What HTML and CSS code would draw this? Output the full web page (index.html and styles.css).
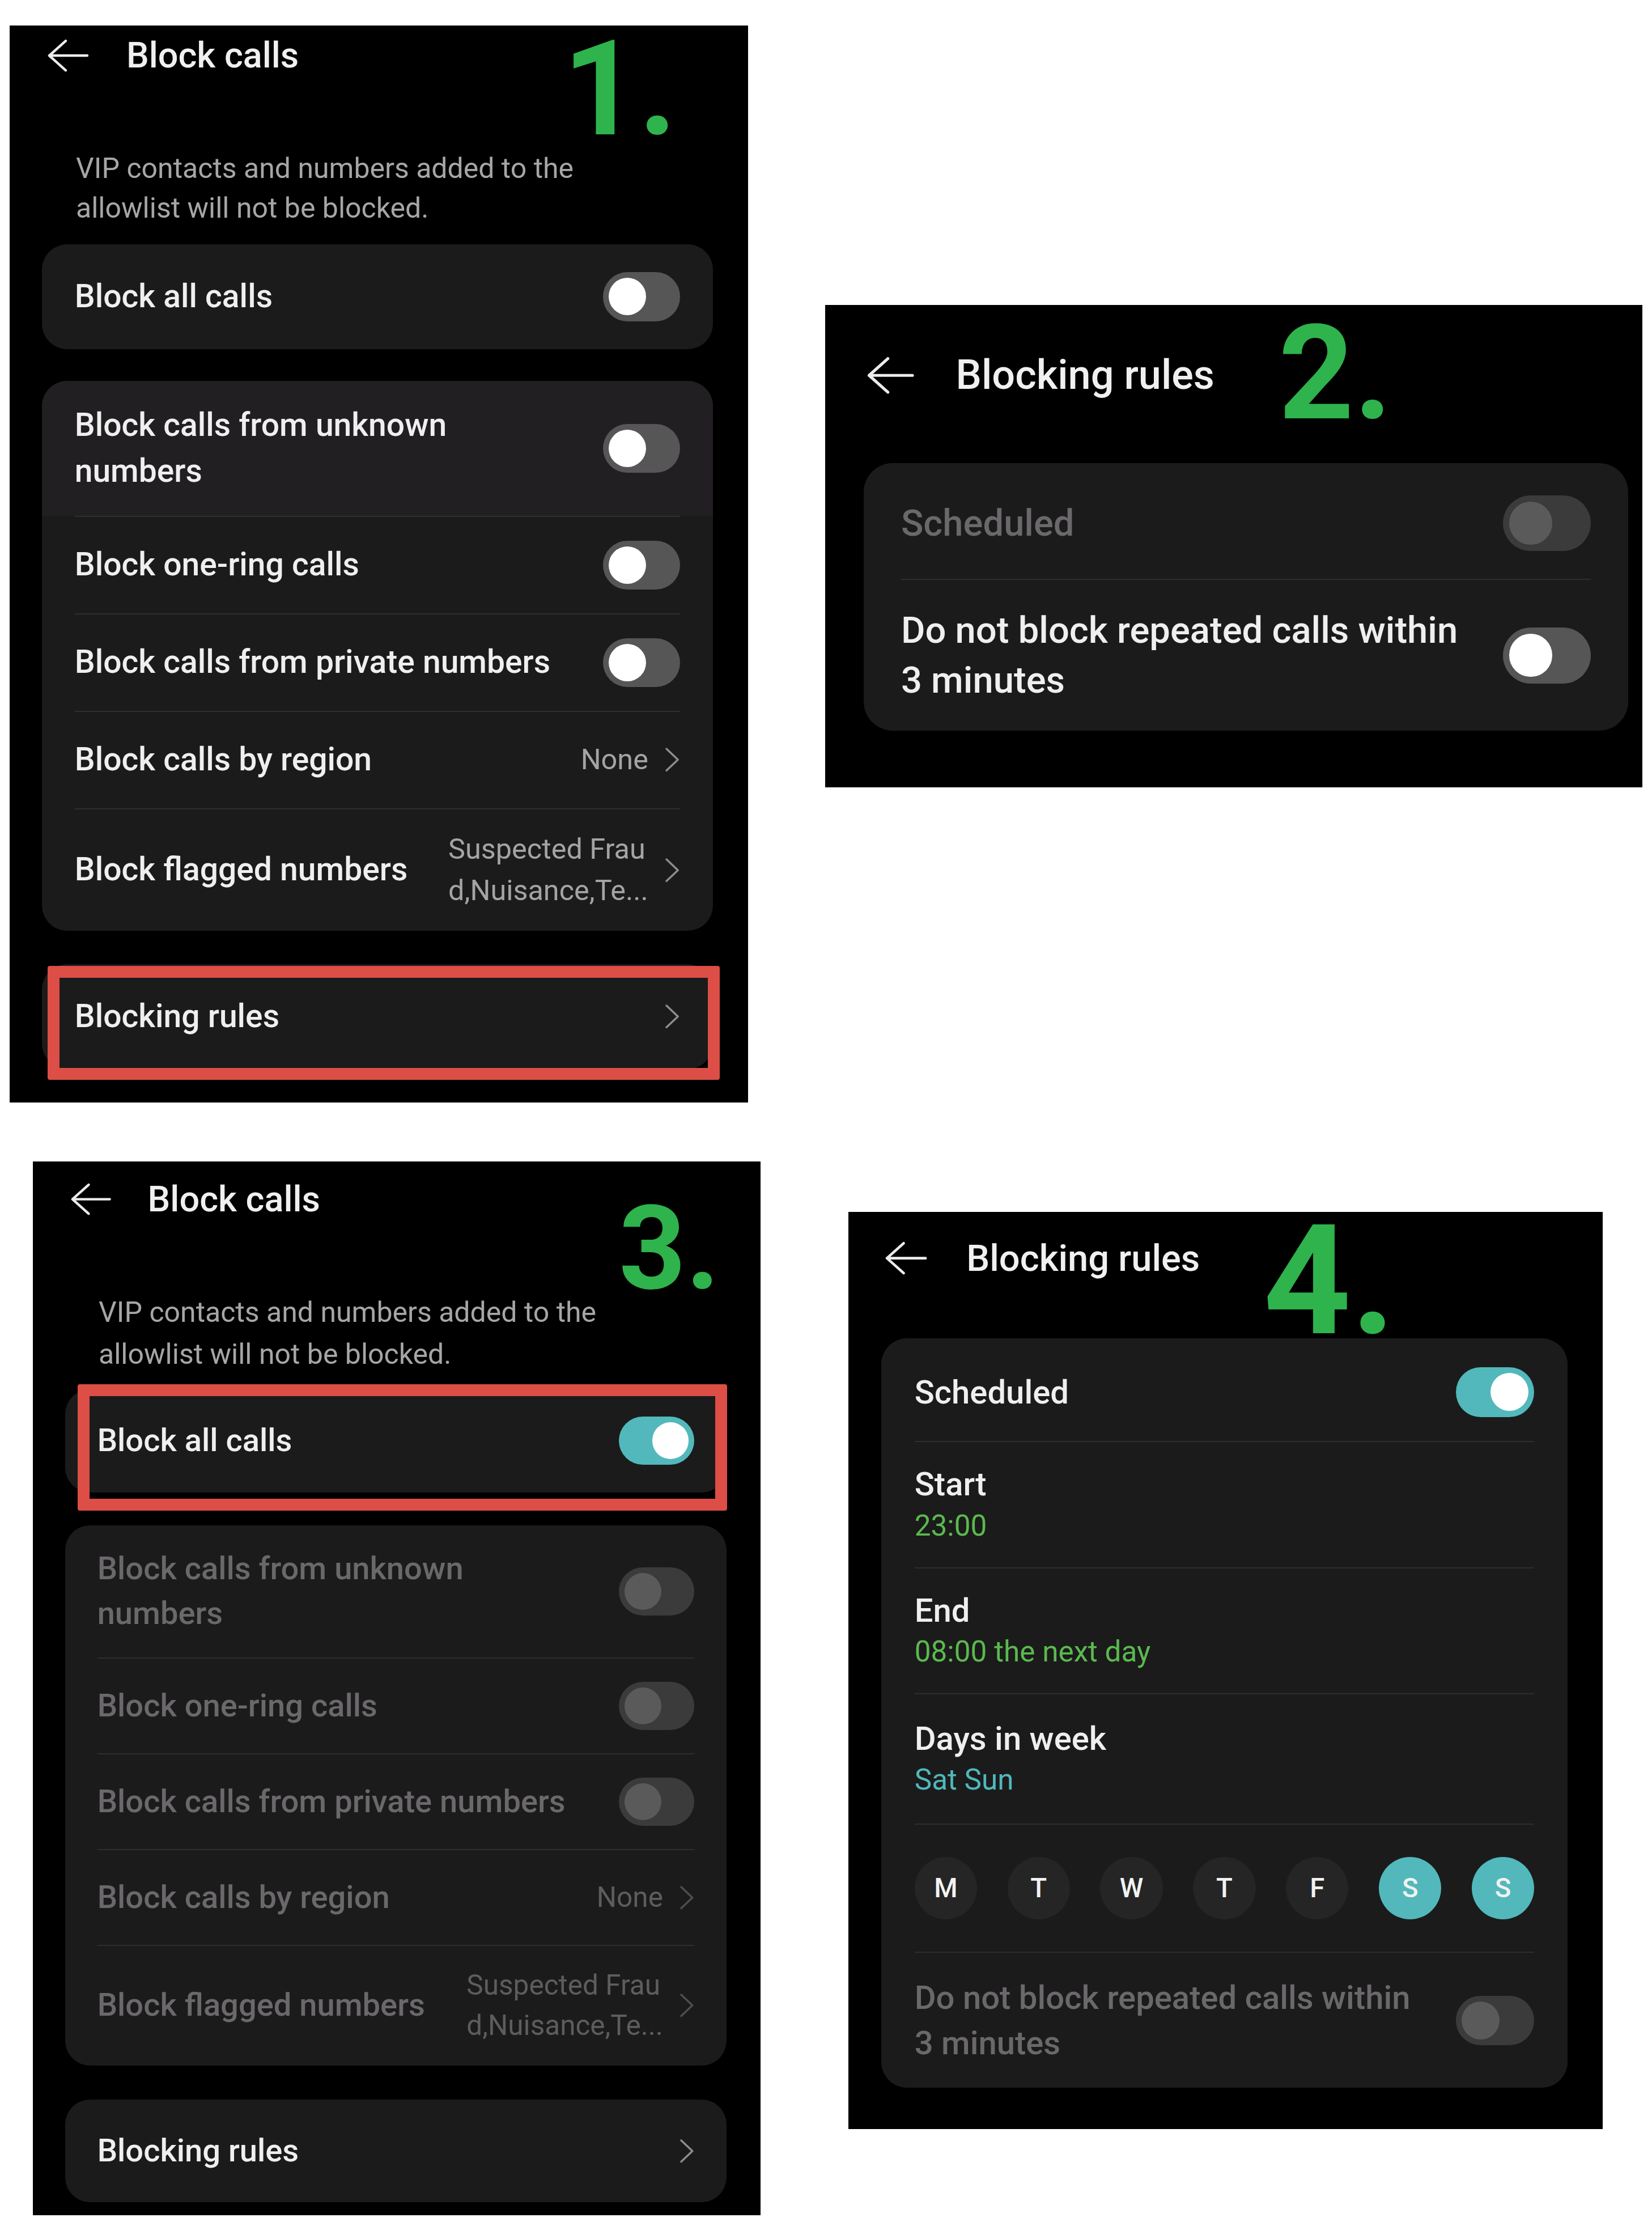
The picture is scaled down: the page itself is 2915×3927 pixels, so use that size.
FILE: index.html
```html
<!DOCTYPE html>
<html lang="en">
<head>
<meta charset="utf-8">
<title>Block calls – steps</title>
<link rel="stylesheet" href="styles.css">
</head>
<body>

<section class="phone p1">
  <header class="bar">
    <svg class="back" viewBox="0 0 74 58"><path d="M71 29H4M33 3L4 29L33 55"/></svg>
    <h1 class="title">Block calls</h1>
  </header>
  <span class="step">1.</span>
  <p class="note">VIP contacts and numbers added to the allowlist will not be blocked.</p>
  <div class="card c1">
    <div class="item"><div class="in h33"><span class="lbl">Block all calls</span><span class="tg"><i class="knob"></i></span></div></div>
  </div>
  <div class="card c2">
    <div class="item pressed"><div class="in h425"><span class="lbl">Block calls from unknown<br>numbers</span><span class="tg"><i class="knob"></i></span></div></div>
    <div class="item"><div class="in h307"><span class="lbl">Block one-ring calls</span><span class="tg"><i class="knob"></i></span></div></div>
    <div class="item"><div class="in h307"><span class="lbl">Block calls from private numbers</span><span class="tg"><i class="knob"></i></span></div></div>
    <div class="item"><div class="in h307"><span class="lbl">Block calls by region</span><span class="val"><span class="vt">None</span><svg class="chev" viewBox="0 0 28 46"><path d="M4 4L24 23L4 42"/></svg></span></div></div>
    <div class="item"><div class="in h387"><span class="lbl">Block flagged numbers</span><span class="val"><span class="vt"><span>Suspected Frau</span><span>d,Nuisance,Te...</span></span><svg class="chev" viewBox="0 0 28 46"><path d="M4 4L24 23L4 42"/></svg></span></div></div>
  </div>
  <div class="card c3">
    <div class="item"><div class="in h33"><span class="lbl">Blocking rules</span><span class="val"><svg class="chev" viewBox="0 0 28 46"><path d="M4 4L24 23L4 42"/></svg></span></div></div>
  </div>
  <div class="red"></div>
</section>

<section class="phone p2">
  <header class="bar">
    <svg class="back" viewBox="0 0 74 58"><path d="M71 29H4M33 3L4 29L33 55"/></svg>
    <h1 class="title">Blocking rules</h1>
  </header>
  <span class="step">2.</span>
  <div class="card">
    <div class="item"><div class="in h319 low"><span class="lbl dim">Scheduled</span><span class="tg dis"><i class="knob"></i></span></div></div>
    <div class="item"><div class="in h419"><span class="lbl">Do not block repeated calls within<br>3 minutes</span><span class="tg"><i class="knob"></i></span></div></div>
  </div>
</section>

<section class="phone p3">
  <header class="bar">
    <svg class="back" viewBox="0 0 74 58"><path d="M71 29H4M33 3L4 29L33 55"/></svg>
    <h1 class="title">Block calls</h1>
  </header>
  <span class="step">3.</span>
  <p class="note">VIP contacts and numbers added to the allowlist will not be blocked.</p>
  <div class="card c1">
    <div class="item"><div class="in h33"><span class="lbl">Block all calls</span><span class="tg on"><i class="knob"></i></span></div></div>
  </div>
  <div class="card c2">
    <div class="item"><div class="in h425"><span class="lbl dim">Block calls from unknown<br>numbers</span><span class="tg dis"><i class="knob"></i></span></div></div>
    <div class="item"><div class="in h307"><span class="lbl dim">Block one-ring calls</span><span class="tg dis"><i class="knob"></i></span></div></div>
    <div class="item"><div class="in h307"><span class="lbl dim">Block calls from private numbers</span><span class="tg dis"><i class="knob"></i></span></div></div>
    <div class="item"><div class="in h307"><span class="lbl dim">Block calls by region</span><span class="val dim"><span class="vt">None</span><svg class="chev" viewBox="0 0 28 46"><path d="M4 4L24 23L4 42"/></svg></span></div></div>
    <div class="item"><div class="in h387"><span class="lbl dim">Block flagged numbers</span><span class="val dim"><span class="vt"><span>Suspected Frau</span><span>d,Nuisance,Te...</span></span><svg class="chev" viewBox="0 0 28 46"><path d="M4 4L24 23L4 42"/></svg></span></div></div>
  </div>
  <div class="card c3">
    <div class="item"><div class="in h33"><span class="lbl">Blocking rules</span><span class="val"><svg class="chev" viewBox="0 0 28 46"><path d="M4 4L24 23L4 42"/></svg></span></div></div>
  </div>
  <div class="red"></div>
</section>

<section class="phone p4">
  <header class="bar">
    <svg class="back" viewBox="0 0 74 58"><path d="M71 29H4M33 3L4 29L33 55"/></svg>
    <h1 class="title">Blocking rules</h1>
  </header>
  <span class="step">4.</span>
  <div class="card">
    <div class="item"><div class="in h318 low"><span class="lbl">Scheduled</span><span class="tg on"><i class="knob"></i></span></div></div>
    <div class="item"><div class="in h39"><div class="stack"><span class="lbl">Start</span><span class="sub green">23:00</span></div></div></div>
    <div class="item"><div class="in h39"><div class="stack"><span class="lbl">End</span><span class="sub green">08:00 the next day</span></div></div></div>
    <div class="item"><div class="in h403"><div class="stack"><span class="lbl">Days in week</span><span class="sub teal">Sat Sun</span></div></div></div>
    <div class="item"><div class="in h398">
      <div class="days">
        <span class="day">M</span><span class="day">T</span><span class="day">W</span><span class="day">T</span><span class="day">F</span><span class="day sel">S</span><span class="day sel">S</span>
      </div>
    </div></div>
    <div class="item"><div class="in h421"><span class="lbl dim">Do not block repeated calls within<br>3 minutes</span><span class="tg dis"><i class="knob"></i></span></div></div>
  </div>
</section>

</body>
</html>
```

FILE: styles.css
```css
* { box-sizing: border-box; }
html, body { margin: 0; padding: 0; }
body {
  width: 2915px;
  height: 3927px;
  background: #ffffff;
  position: relative;
  overflow: hidden;
  font-family: Roboto, "Noto Sans", "Liberation Sans", sans-serif;
}

/* ---------- phone panel ---------- */
.phone {
  position: absolute;
  background: #000;
  color: #efefef;
  display: flex;
  flex-direction: column;
}
.bar { display: flex; align-items: center; flex: none; }
.back {
  width: 1.32em; height: 1.04em; flex: none;
  fill: none; stroke: #ececec; stroke-width: 4.5;
  stroke-linecap: round; stroke-linejoin: round;
}
.title {
  margin: 0; font-weight: 500; line-height: 1.2;
  color: #f0f0f0; white-space: nowrap;
}
.step {
  position: absolute; color: #2fb34c;
  font-weight: 700; line-height: 1; white-space: nowrap;
}
.note {
  margin: 0; font-size: 50px; color: #a6a6a6;
  max-width: 990px; flex: none;
}

/* ---------- cards & rows ---------- */
.card {
  background: #1b1b1b; border-radius: 0.8em;
  overflow: hidden; flex: none;
}
.item { padding: 0 1.03em; }
.item.pressed { background: #221f23; }
.in {
  display: flex; align-items: center;
  justify-content: space-between; gap: 0.5em;
}
.in.low { padding-top: 8px; }
.item + .item .in { border-top: 2px solid #2e2e2e; }
.h33 { min-height: 3.3em; }
.h307 { min-height: 3.07em; }
.h425 { min-height: 4.25em; }
.h387 { min-height: 3.87em; }
.h319 { min-height: 3.19em; }
.h419 { min-height: 4.19em; }
.h318 { min-height: 3.18em; }
.h39 { min-height: 3.9em; }
.h403 { min-height: 4.03em; }
.h398 { min-height: 3.98em; }
.h421 { min-height: 4.21em; }

.lbl { font-size: 1.018em; font-weight: 500; line-height: 1.42; white-space: nowrap; }
.lbl.dim { color: #6b686b; }

.val {
  display: flex; align-items: center; gap: 0.56em;
  font-size: 0.9em; color: #a4a4a4; line-height: 1.44;
  white-space: nowrap;
}
.vt span { display: block; }
.val.dim { color: #5e5c5e; }
.chev {
  width: 0.56em; height: 0.92em; flex: none;
  fill: none; stroke: #8d8d8d; stroke-width: 3.5;
  stroke-linecap: round; stroke-linejoin: round;
}
.val.dim .chev { stroke: #4e4e4e; }

/* ---------- toggle ---------- */
.tg {
  width: 2.43em; height: 1.54em; border-radius: 0.77em;
  background: #555655; display: flex; align-items: center;
  padding: 0 0.18em; flex: none;
}
.knob {
  display: block; width: 1.18em; height: 1.18em;
  border-radius: 50%; background: #ffffff;
}
.tg.on { background: #52b8bb; justify-content: flex-end; }
.tg.dis { background: #3a3b3a; }
.tg.dis .knob { background: #5a5a5a; }

/* ---------- highlight box ---------- */
.red {
  position: absolute;
  border: 21px solid #dc4e46;
  border-radius: 4px;
}

/* ---------- schedule screen ---------- */
.stack { display: flex; flex-direction: column; }
.stack .lbl { line-height: 1.28; }
.sub { font-size: 0.9em; line-height: 1.4; }
.green { color: #5bb94f; }
.teal { color: #4fb8bb; }
.days { display: flex; justify-content: space-between; width: 100%; }
.day {
  font-size: 0.83em; font-weight: 500;
  width: 2.33em; height: 2.33em; border-radius: 50%;
  background: #242524; color: #f2f2f2;
  display: flex; align-items: center; justify-content: center;
}
.day.sel { background: #52b8bb; }

/* ---------- panel 1 ---------- */
.p1 { left: 17px; top: 45px; width: 1303px; height: 1900px; font-size: 56px; padding: 0 62px 0 57px; }
.p1 .bar { height: 106px; padding-left: 9px; }
.p1 .title { font-size: 63px; margin-left: 66px; }
.p1 .step { font-size: 233px; left: 976px; top: -4px; }
.p1 .note { margin-top: 111px; margin-left: 60px; line-height: 70px; }
.p1 .c1 { margin-top: 29px; }
.p1 .c2 { margin-top: 56px; }
.p1 .c3 { margin-top: 59px; }
.p1 .red { left: 67px; top: 1659px; width: 1186px; height: 201px; }

/* ---------- panel 2 ---------- */
.p2 { left: 1456px; top: 538px; width: 1442px; height: 851px; font-size: 64px; padding: 0 25px 0 68px; }
.p2 .bar { height: 248px; padding-left: 5px; }
.p2 .title { font-size: 72px; margin-left: 73px; }
.p2 .step { font-size: 232px; left: 800px; top: 5px; }
.p2 .card { margin-top: 31px; }
.p2 .lbl { line-height: 1.36; }

/* ---------- panel 3 ---------- */
.p3 { left: 58px; top: 2049px; width: 1284px; height: 1859px; font-size: 55px; padding: 0 60px 0 57px; }
.p3 .bar { height: 134px; padding-left: 9px; }
.p3 .title { font-size: 63px; margin-left: 64px; }
.p3 .step { font-size: 206px; left: 1034px; top: 51px; }
.p3 .note { margin-top: 95px; margin-left: 59px; line-height: 74px; }
.p3 .c1 { margin-top: 25px; }
.p3 .c2 { margin-top: 58px; }
.p3 .c3 { margin-top: 60px; }
.p3 .lbl { font-size: 1.02em; }
.p3 .red { left: 79px; top: 393px; width: 1146px; height: 223px; }

/* ---------- panel 4 ---------- */
.p4 { left: 1497px; top: 2138px; width: 1331px; height: 1618px; font-size: 57px; padding: 0 62px 0 58px; }
.p4 .bar { height: 164px; padding-left: 6px; }
.p4 .title { font-size: 65px; margin-left: 69px; }
.p4 .step { font-size: 270px; left: 732px; top: -13px; }
.p4 .card { margin-top: 59px; }
.p4 .in > .lbl { line-height: 1.38; }
```
